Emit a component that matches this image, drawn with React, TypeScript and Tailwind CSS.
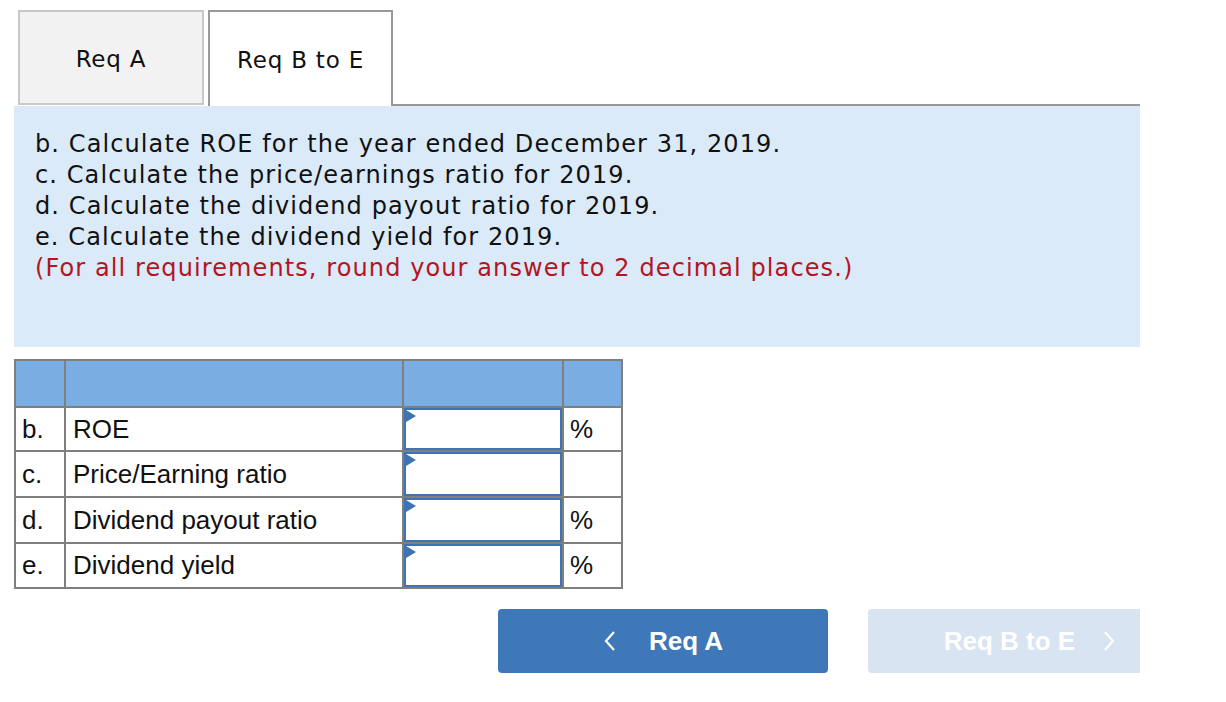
import React from 'react';

const rows = [
  { key: 'b.', label: 'ROE', unit: '%' },
  { key: 'c.', label: 'Price/Earning ratio', unit: '' },
  { key: 'd.', label: 'Dividend payout ratio', unit: '%' },
  { key: 'e.', label: 'Dividend yield', unit: '%' },
];

function Chevron({ dir }: { dir: 'left' | 'right' }) {
  return (
    <svg width="14" height="24" viewBox="0 0 14 24" fill="none" className="shrink-0">
      {dir === 'left' ? (
        <polyline points="11,3 3,12 11,21" stroke="white" strokeWidth="2.2" />
      ) : (
        <polyline points="3,3 11,12 3,21" stroke="white" strokeWidth="2.2" />
      )}
    </svg>
  );
}

export default function App() {
  return (
    <div className="w-[1226px] h-[702px] bg-white pl-[14px] pt-[10px]">
      <div className="w-[1126px]">
        {/* tabs */}
        <div className="flex items-start pl-[4px] font-['DejaVu_Sans',Verdana,sans-serif] text-[23px] tracking-[0.8px] text-[#111]">
          <div className="w-[186px] h-[95px] border-2 border-[#c8c8c8] bg-[#f2f2f2] flex items-center justify-center pt-[3px]">
            Req A
          </div>
          <div className="ml-[4px] w-[185px] h-[96px] border-2 border-b-0 border-[#999999] bg-white flex items-center justify-center pt-[2px]">
            Req B to E
          </div>
          <div className="flex-1 h-[96px] border-b-2 border-[#999999]" />
        </div>

        {/* instructions */}
        <div className="h-[241px] bg-[#dbeaf8] pl-[21px] pt-[23px] font-['DejaVu_Sans',Verdana,sans-serif] text-[24px] tracking-[1.1px] leading-[31px] text-[#111]">
          <p>b. Calculate ROE for the year ended December 31, 2019.</p>
          <p>c. Calculate the price/earnings ratio for 2019.</p>
          <p>d. Calculate the dividend payout ratio for 2019.</p>
          <p>e. Calculate the dividend yield for 2019.</p>
          <p className="text-[#b4151f]">(For all requirements, round your answer to 2 decimal places.)</p>
        </div>

        {/* answer table */}
        <div className="mt-[12px] w-[609px] bg-[#7f7f7f] p-[2px] grid grid-cols-[48px_336px_158px_57px] grid-rows-[45px_42px_44px_44px_43px] gap-[2px] font-['Liberation_Sans',Arial,sans-serif] text-[26px] text-[#111]">
          <div className="bg-[#7aade1]" />
          <div className="bg-[#7aade1]" />
          <div className="bg-[#7aade1]" />
          <div className="bg-[#7aade1]" />
          {rows.map((r) => (
            <React.Fragment key={r.key}>
              <div className="bg-white flex items-center pl-[6px]">{r.key}</div>
              <div className="bg-white flex items-center pl-[7px]">{r.label}</div>
              <div className="relative bg-white border-2 border-[#3e73b5]">
                <span className="absolute top-0 left-0 w-0 h-0 border-y-[6px] border-y-transparent border-l-[10px] border-l-[#3e73b5]" />
              </div>
              <div className="bg-white flex items-center pl-[6px]">{r.unit}</div>
            </React.Fragment>
          ))}
        </div>

        {/* navigation */}
        <div className="mt-[20px] overflow-hidden flex pl-[484px] font-['Liberation_Sans',Arial,sans-serif] font-bold text-[26px] text-white">
          <button className="shrink-0 w-[330px] h-[64px] rounded-[4px] bg-[#3e78b8] flex items-center justify-center gap-[32px]">
            <Chevron dir="left" />
            <span>Req A</span>
          </button>
          <button className="shrink-0 ml-[40px] w-[330px] h-[64px] rounded-[4px] bg-[#d8e4f2] flex items-center justify-center gap-[27px] pr-[6px]">
            <span>Req B to E</span>
            <Chevron dir="right" />
          </button>
        </div>
      </div>
    </div>
  );
}
